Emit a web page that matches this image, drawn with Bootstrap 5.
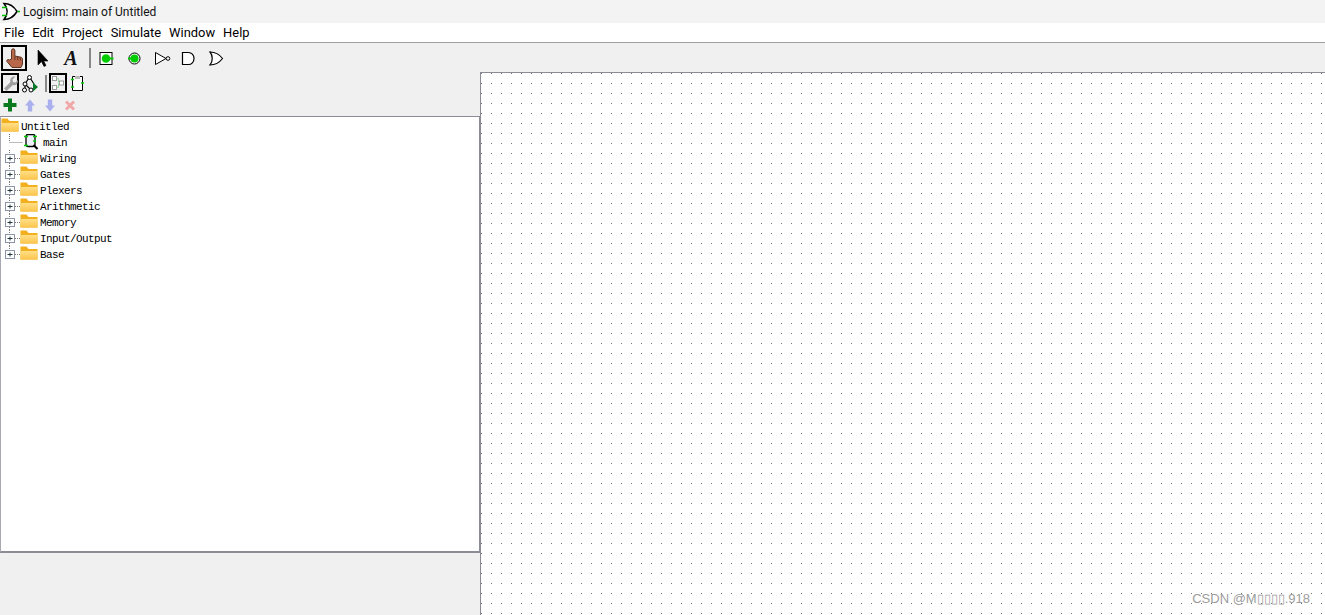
<!DOCTYPE html>
<html lang="en">
<head>
<meta charset="UTF-8" />
<meta name="viewport" content="width=device-width, initial-scale=1" />
<title>Logisim: main of Untitled</title>
<link href="https://cdn.jsdelivr.net/npm/bootstrap@5.3.0/dist/css/bootstrap.min.css" rel="stylesheet" />
<style>
  html, body { height: 100%; overflow: hidden; background: #f0f0f0; }
  svg { display: block; flex: none; }
  .win-title { height: 23px; background: #f3f3f3; font: 12px/23px Roboto, sans-serif; color: #111; }
  .win-title span { padding-top: 2px; }
  .menu-strip { height: 20px; background: #fff; border-bottom: 1px solid #a0a0a0; font: 12.9px/19px Roboto, sans-serif; color: #000; padding-left: 4px; gap: 8px; }
  .tool-row-top { height: 29px; padding-top: 1px; }
  .left-pane { width: 480px; min-height: 0; }
  .tool-row-mid { height: 23px; }
  .tool-row-low { height: 21px; }
  .tree-box { height: 437px; background: #fff; border-top: 1px solid #8a8d96; border-bottom: 2px solid #8a8d96; border-right: 1px solid #8a8d96; border-left: 1px solid #a8aab0; padding-top: 1px; font: 11px/16px "Liberation Mono", monospace; letter-spacing: -.6px; color: #000; }
  .tree-line { height: 16px; }
  .tree-label { padding-top: 1px; margin-left: 1px; }
  .tree-root { margin-left: 2px; }
  .tree-leaf { margin-left: 4px; }
  .attr-box { background: #f0f0f0; }
  .circuit-canvas { border-top: 1px solid #8a8d96; border-left: 1px solid #8a8d96; background-color: #777;
    background-image: linear-gradient(to right, transparent 1px, #fff 1px), linear-gradient(to bottom, transparent 1px, #fff 1px);
    background-size: 10px 10px; }
  .csdn-mark { right: 15px; bottom: 7px; font: 13px/18px "Liberation Sans", sans-serif; color: #8c8c8c; opacity: .85; }
  .tool-a { font: italic bold 20px/28px "Liberation Serif", serif; width: 28px; padding-left: 2px; text-align: center; color: #111; }
  .v-sep { width: 2px; background: #888; }
  .v-sep-top { height: 20px; margin: 0 1px 0 5px; }
  .v-sep-mid { height: 17px; margin: 0 1px 0 5px; }
  .sprite-defs { width: 0; height: 0; }
</style>
</head>
<body>
<svg class="position-absolute sprite-defs">
  <defs>
    <linearGradient id="folderFill" x1="0" y1="0" x2="0" y2="1"><stop offset="0" stop-color="#ffe08a"/><stop offset="1" stop-color="#fbc44a"/></linearGradient>
    <symbol id="folderIcon" viewBox="0 0 18 14" width="18" height="14">
      <path d="M.5 .5h6l2 2.500h9v10.500H.5Z" fill="#f2b01f"/>
      <path d="M.5 5h17v8.500H.5Z" fill="url(#folderFill)"/>
    </symbol>
    <symbol id="plusBranch" viewBox="0 0 38 16" width="38" height="16">
      <path d="M8.500 13v3" stroke="#777" stroke-dasharray="1 1"/>
      <path d="M8.500 0v3M14 8.500h5" stroke="#777" stroke-dasharray="1 1"/>
      <rect x="4.500" y="4.500" width="9" height="8" fill="#fff" stroke="#8a94a6"/>
      <path d="M6.500 8.500h5M9 6.500v4" stroke="#234"/>
      <use href="#folderIcon" x="19" y="0"/>
    </symbol>
    <symbol id="plusBranchEnd" viewBox="0 0 38 16" width="38" height="16">
      <path d="M8.500 0v3M14 8.500h5" stroke="#777" stroke-dasharray="1 1"/>
      <rect x="4.500" y="4.500" width="9" height="8" fill="#fff" stroke="#8a94a6"/>
      <path d="M6.500 8.500h5M9 6.500v4" stroke="#234"/>
      <use href="#folderIcon" x="19" y="0"/>
    </symbol>
  </defs>
</svg>
<div class="d-flex flex-column h-100">

  <div class="win-title d-flex align-items-center">
    <svg width="23" height="23" viewBox="0 0 23 23">
      <path d="M4 3.500C10 3.500 14 6.500 17 11.500 14 16.500 10 19.500 4 19.500 8 14.500 8 8.500 4 3.500Z" fill="#fff" stroke="#000" stroke-width="1.500"/>
      <path d="M2 7.500h5M2 15.500h5M17.500 11.500h2.500" stroke="#0b0" stroke-width="1.500"/>
    </svg>
    <span>Logisim: main of Untitled</span>
  </div>

  <div class="menu-strip d-flex">
    <span>File</span><span>Edit</span><span>Project</span><span>Simulate</span><span>Window</span><span>Help</span>
  </div>

  <div class="tool-row-top d-flex align-items-center">
    <svg width="28" height="28" viewBox="0 0 28 28">
      <rect x="2" y="2" width="24" height="24" fill="none" stroke="#000" stroke-width="2"/>
      <path d="M11.500 15V6.500a1.700 1.700 0 0 1 3.400 0V12l6 1.200c1 .2 1.600 1 1.600 2V20l-1.500 3.500h-9L7 17.500c-.8-1.300 1-2.800 2.300-1.500Z" fill="#b9674a" stroke="#5a3322"/>
      <path d="M14.900 12.500v3.500M17.700 13v3M20.300 13.500v3" stroke="#5a3322"/>
    </svg>
    <svg width="28" height="28" viewBox="0 0 28 28">
      <path d="M10 6V21L13.500 17.500 16 22.500 18 21.500 15.700 17H20Z" fill="#000" stroke="#000" stroke-width=".6"/>
    </svg>
    <span class="tool-a">A</span>
    <span class="v-sep v-sep-top"></span>
    <svg width="28" height="28" viewBox="0 0 28 28">
      <rect x="8" y="8.500" width="12" height="12" fill="#fff" stroke="#000"/>
      <circle cx="14" cy="14.500" r="4.300" fill="#0c0"/><path d="M15.500 14.500h6" stroke="#0c0" stroke-width="2"/>
    </svg>
    <svg width="28" height="28" viewBox="0 0 28 28">
      <circle cx="14.500" cy="14.500" r="5.500" fill="#fff" stroke="#000"/>
      <circle cx="14.500" cy="14.500" r="4" fill="#0c0"/><path d="M8 14.500h6" stroke="#0c0" stroke-width="2"/>
    </svg>
    <svg width="28" height="28" viewBox="0 0 28 28">
      <path d="M7.500 8.500V20.500L18 14.500Z" fill="#fff" stroke="#000"/><circle cx="20" cy="14.500" r="1.800" fill="#fff" stroke="#000"/>
    </svg>
    <svg width="28" height="28" viewBox="0 0 28 28">
      <path d="M6.500 8.500H12.500C15.500 8.500 18 11 18 14.500S15.500 20.500 12.500 20.500H6.500Z" fill="#fff" stroke="#000" stroke-width="1.200"/>
    </svg>
    <svg width="28" height="28" viewBox="0 0 28 28">
      <path d="M6 8C11 8 15.500 10.500 18.500 14.500 15.500 18.500 11 21 6 21 9 17.500 9 11.500 6 8Z" fill="#fff" stroke="#000" stroke-width="1.200"/>
    </svg>
  </div>

  <div class="d-flex flex-grow-1 tool-body">
    <div class="left-pane d-flex flex-column flex-shrink-0">
      <div class="tool-row-mid d-flex align-items-center">
        <svg width="20" height="23" viewBox="0 0 20 23">
          <rect x="2" y="2" width="16" height="18" fill="none" stroke="#000" stroke-width="2"/>
          <path d="M4 16.500l6.500-6.500c-1-3 1-6 5-5.500l-3 3 .5 2.500 2.500.5 2.400-2.400c.5 4-2 5.900-4.900 4.900L6.500 19Z" fill="#a0a0a0"/>
        </svg>
        <svg width="20" height="23" viewBox="0 0 20 23">
          <path d="M5 12L9.500 5 14 12M5 12v6M5 12l6 6" fill="none" stroke="#000" stroke-width="1.200"/>
          <circle cx="9.500" cy="5.500" r="2" fill="#fff" stroke="#000"/><circle cx="5" cy="12" r="2" fill="#fff" stroke="#000"/><circle cx="4.500" cy="18" r="2" fill="#fff" stroke="#000"/><circle cx="11" cy="18" r="2" fill="#fff" stroke="#000"/>
          <path d="M13 10.500L18 15 13 19.500Z" fill="#0a7a2a"/>
        </svg>
        <span class="v-sep v-sep-mid"></span>
        <svg width="20" height="23" viewBox="0 0 20 23">
          <rect x="2" y="2" width="16" height="18" fill="none" stroke="#000" stroke-width="2"/>
          <g fill="#fff" stroke="#9a9a9a"><rect x="4.500" y="4.500" width="4" height="4"/><rect x="4.500" y="13.500" width="4" height="4"/><rect x="11.500" y="9" width="4" height="4"/></g>
          <path d="M8.500 6.500h2v4h1M8.500 15.500h2v-4" fill="none" stroke="#9ed29e"/>
        </svg>
        <svg width="20" height="23" viewBox="0 0 20 23">
          <path d="M4.500 4.500h10v14h-10Z" fill="#fff" stroke="#000"/><rect x="7" y="4" width="5" height="3" fill="#bbb"/>
          <path d="M3 7.500h3M3 15h3M13 11h3" stroke="#0c0" stroke-width="1.500"/>
        </svg>
      </div>
      <div class="tool-row-low d-flex align-items-center">
        <svg width="20" height="21" viewBox="0 0 20 21"><path d="M8 3.500h4V8h4.500v4H12v4.500H8V12H3.500V8H8Z" fill="#0a7a1e"/></svg>
        <svg width="20" height="21" viewBox="0 0 20 21"><path d="M10 4.500l5 6h-2.800v6H7.800v-6H5Z" fill="#aab0ee"/></svg>
        <svg width="20" height="21" viewBox="0 0 20 21"><path d="M10 16.500l5-6h-2.800v-6H7.800v6H5Z" fill="#aab0ee"/></svg>
        <svg width="20" height="21" viewBox="0 0 20 21"><path d="M6 6.500l8 8M14 6.500l-8 8" stroke="#f0a8a8" stroke-width="3"/></svg>
      </div>

      <div class="tree-box flex-shrink-0">
        <div class="tree-line d-flex">
          <svg width="18" height="16"><use href="#folderIcon"/></svg>
          <span class="tree-label tree-root">Untitled</span>
        </div>
        <div class="tree-line d-flex">
          <svg width="38" height="16" viewBox="0 0 38 16">
            <path d="M8.500 0v8M8.500 8.500H22" stroke="#777" stroke-dasharray="1 1"/>
            <path d="M25 2.500C25 .8 26 .5 27 .5h5c1 0 2 .3 2 2v8c0 1.700-1 2-2 2h-5c-1 0-2-.3-2-2Z" fill="#eef1fb" stroke="#000" stroke-width="1.300"/>
            <path d="M23 2.500h4M32 2.500h4M23 11.500h4M32 7h3" stroke="#0c0" stroke-width="1.300"/>
            <path d="M32.500 11l4 4" stroke="#000" stroke-width="2.200"/>
          </svg>
          <span class="tree-label tree-leaf">main</span>
        </div>
        <div class="tree-line d-flex"><svg width="38" height="16"><use href="#plusBranch"/></svg><span class="tree-label">Wiring</span></div>
        <div class="tree-line d-flex"><svg width="38" height="16"><use href="#plusBranch"/></svg><span class="tree-label">Gates</span></div>
        <div class="tree-line d-flex"><svg width="38" height="16"><use href="#plusBranch"/></svg><span class="tree-label">Plexers</span></div>
        <div class="tree-line d-flex"><svg width="38" height="16"><use href="#plusBranch"/></svg><span class="tree-label">Arithmetic</span></div>
        <div class="tree-line d-flex"><svg width="38" height="16"><use href="#plusBranch"/></svg><span class="tree-label">Memory</span></div>
        <div class="tree-line d-flex"><svg width="38" height="16"><use href="#plusBranch"/></svg><span class="tree-label">Input/Output</span></div>
        <div class="tree-line d-flex"><svg width="38" height="16"><use href="#plusBranchEnd"/></svg><span class="tree-label">Base</span></div>
      </div>
      <div class="attr-box flex-grow-1"></div>
    </div>

    <div class="circuit-canvas flex-grow-1 position-relative">
      <span class="csdn-mark position-absolute">CSDN @M▯▯▯▯.918</span>
    </div>
  </div>
</div>
<script src="https://cdn.jsdelivr.net/npm/bootstrap@5.3.0/dist/js/bootstrap.bundle.min.js"></script>
</body>
</html>
